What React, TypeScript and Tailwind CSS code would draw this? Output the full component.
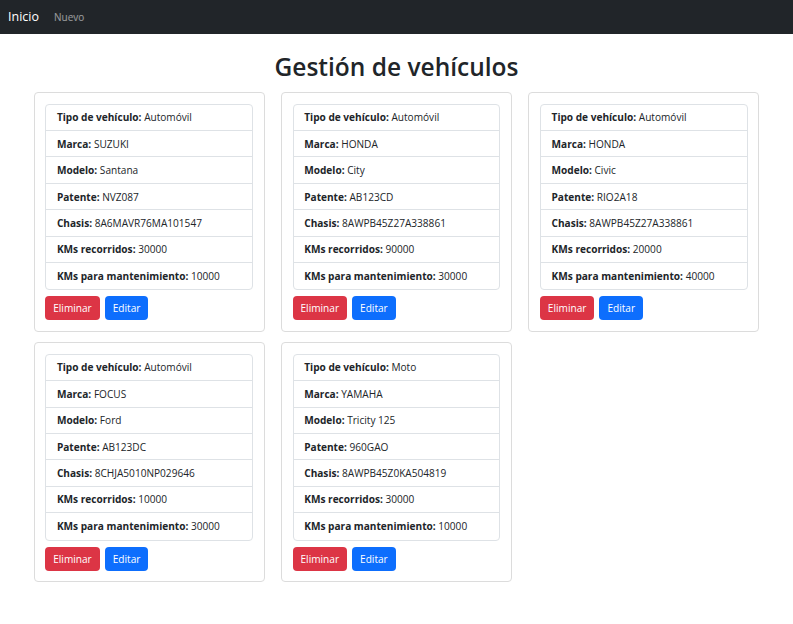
const vehicles = [
  { tipo: "Automóvil", marca: "SUZUKI", modelo: "Santana", patente: "NVZ087", chasis: "8A6MAVR76MA101547", kms: "30000", mant: "10000" },
  { tipo: "Automóvil", marca: "HONDA", modelo: "City", patente: "AB123CD", chasis: "8AWPB45Z27A338861", kms: "90000", mant: "30000" },
  { tipo: "Automóvil", marca: "HONDA", modelo: "Civic", patente: "RIO2A18", chasis: "8AWPB45Z27A338861", kms: "20000", mant: "40000" },
  { tipo: "Automóvil", marca: "FOCUS", modelo: "Ford", patente: "AB123DC", chasis: "8CHJA5010NP029646", kms: "10000", mant: "30000" },
  { tipo: "Moto", marca: "YAMAHA", modelo: "Tricity 125", patente: "960GAO", chasis: "8AWPB45Z0KA504819", kms: "30000", mant: "10000" },
];

type Vehicle = (typeof vehicles)[0];

function VehicleCard({ v }: { v: Vehicle }) {
  const rows: [string, string][] = [
    ["Tipo de vehículo", v.tipo],
    ["Marca", v.marca],
    ["Modelo", v.modelo],
    ["Patente", v.patente],
    ["Chasis", v.chasis],
    ["KMs recorridos", v.kms],
    ["KMs para mantenimiento", v.mant],
  ];
  return (
    <div className="border border-[#dcdcdc] rounded-[4px] p-[10.7px] bg-white">
      <ul className="border border-[#dee2e6] rounded-[4px]">
        {rows.map(([k, val], i) => (
          <li
            key={k}
            className={`h-[26.4px] flex items-center px-[10.7px] ${i < rows.length - 1 ? "border-b border-[#dee2e6]" : ""}`}
          >
            <span>
              <b className="font-bold">{k}:</b> {val}
            </span>
          </li>
        ))}
      </ul>
      <div className="flex gap-[5px] mt-[6px]">
        <button className="h-[24px] px-[8px] rounded-[4px] bg-[#dc3545] text-white">Eliminar</button>
        <button className="h-[24px] px-[8px] rounded-[4px] bg-[#0d6efd] text-white">Editar</button>
      </div>
    </div>
  );
}

export default function App() {
  return (
    <div className="min-h-screen bg-white text-[#212529] text-[10.1px] leading-[16px] font-['Open_Sans',sans-serif]">
      <nav className="h-[34px] bg-[#212529] flex items-center px-[8px] gap-[15px]">
        <span className="text-white text-[12.5px]">Inicio</span>
        <span className="text-white/55 text-[10px]">Nuevo</span>
      </nav>
      <div className="w-[726px] mx-auto">
        <h1 className="text-center text-[24.5px] leading-[32px] font-semibold mt-[17px] mb-[9px]">Gestión de vehículos</h1>
        <div className="grid grid-cols-3 gap-x-[16px] gap-y-[10px]">
          {vehicles.map((v, i) => (
            <VehicleCard key={i} v={v} />
          ))}
        </div>
      </div>
    </div>
  );
}
